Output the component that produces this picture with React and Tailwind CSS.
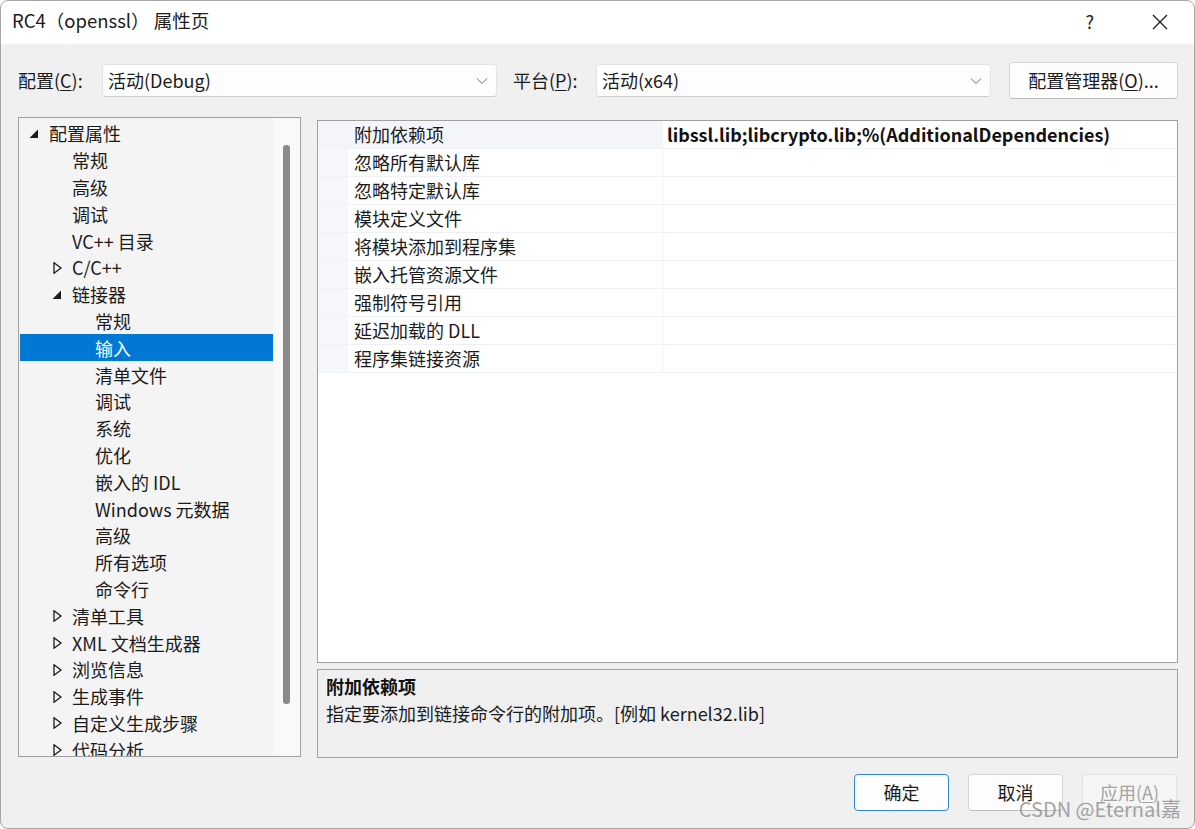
// Visual Studio project property page (Linker > Input), Windows 11 dialog look.

const FONT = {
  fontFamily:
    '"Noto Sans CJK SC", "Noto Sans", "Liberation Sans", sans-serif',
};

// level: 0/1/2 indent, kind: "open" | "closed" | null
const TREE = [
  { level: 0, kind: "open", label: "配置属性" },
  { level: 1, kind: null, label: "常规" },
  { level: 1, kind: null, label: "高级" },
  { level: 1, kind: null, label: "调试" },
  { level: 1, kind: null, label: "VC++ 目录" },
  { level: 1, kind: "closed", label: "C/C++" },
  { level: 1, kind: "open", label: "链接器" },
  { level: 2, kind: null, label: "常规" },
  { level: 2, kind: null, label: "输入", selected: true },
  { level: 2, kind: null, label: "清单文件" },
  { level: 2, kind: null, label: "调试" },
  { level: 2, kind: null, label: "系统" },
  { level: 2, kind: null, label: "优化" },
  { level: 2, kind: null, label: "嵌入的 IDL" },
  { level: 2, kind: null, label: "Windows 元数据" },
  { level: 2, kind: null, label: "高级" },
  { level: 2, kind: null, label: "所有选项" },
  { level: 2, kind: null, label: "命令行" },
  { level: 1, kind: "closed", label: "清单工具" },
  { level: 1, kind: "closed", label: "XML 文档生成器" },
  { level: 1, kind: "closed", label: "浏览信息" },
  { level: 1, kind: "closed", label: "生成事件" },
  { level: 1, kind: "closed", label: "自定义生成步骤" },
  { level: 1, kind: "closed", label: "代码分析" },
];

const INDENT = ["pl-[9px]", "pl-[32px]", "pl-[55px]"];

const PROPS = [
  { name: "附加依赖项", value: "libssl.lib;libcrypto.lib;%(AdditionalDependencies)", active: true },
  { name: "忽略所有默认库" },
  { name: "忽略特定默认库" },
  { name: "模块定义文件" },
  { name: "将模块添加到程序集" },
  { name: "嵌入托管资源文件" },
  { name: "强制符号引用" },
  { name: "延迟加载的 DLL" },
  { name: "程序集链接资源" },
];

function Chevron() {
  return (
    <svg width="12" height="8" viewBox="0 0 12 8" className="shrink-0">
      <path d="M1 1.5 L6 6.5 L11 1.5" fill="none" stroke="#6b6b6b" strokeWidth="1" />
    </svg>
  );
}

function Combo({ value, width }) {
  return (
    <div
      className={`${width} h-[33px] flex items-center pl-[5px] pr-[8px] bg-[#fdfdfd] border border-[#e3e3e3] border-b-[#cfcfcf] rounded-[4px]`}
    >
      <span className="flex-1 text-[18px] text-[#1b1b1b] leading-none pb-[1px]">{value}</span>
      <Chevron />
    </div>
  );
}

function Expander({ kind, selected }) {
  if (kind === "open") {
    return (
      <svg width="10" height="10" viewBox="0 0 10 10" className="mt-[2px]">
        <path d="M9 0.5 L9 9 L0.5 9 Z" fill={selected ? "#fff" : "#1b1b1b"} />
      </svg>
    );
  }
  if (kind === "closed") {
    return (
      <svg width="10" height="12" viewBox="0 0 10 12" className="ml-[1px] mt-[1px]">
        <path d="M1 0.8 L8 6 L1 11.2 Z" fill="none" stroke="#1b1b1b" strokeWidth="1.3" strokeLinejoin="miter" />
      </svg>
    );
  }
  return null;
}

function TreeRow({ item }) {
  return (
    <div
      className={`h-[26.8px] flex items-center ${INDENT[item.level]} ${
        item.selected ? "bg-[#0078d4] text-white" : "text-[#1b1b1b]"
      }`}
    >
      <div className="w-[20px] flex items-center">
        <Expander kind={item.kind} selected={item.selected} />
      </div>
      <span className="text-[18px] leading-none whitespace-nowrap">{item.label}</span>
    </div>
  );
}

function Button({ children, primary, disabled }) {
  return (
    <button
      className={`w-[95px] h-[37px] rounded-[4px] text-[18px] leading-none flex items-center justify-center pb-[1px] ${
        primary
          ? "bg-[#fdfdfd] border border-[#2f86d6] text-[#1b1b1b]"
          : disabled
          ? "bg-[#f5f5f5] border border-[#e2e2e2] text-[#a3a3a3]"
          : "bg-[#fdfdfd] border border-[#d6d6d6] border-b-[#bdbdbd] text-[#1b1b1b]"
      }`}
    >
      {children}
    </button>
  );
}

export default function App() {
  return (
    <div
      className="relative w-[1195px] h-[829px] flex flex-col bg-[#f0f0f0] rounded-[8px] overflow-hidden outline-1 -outline-offset-1 outline-[#a6a6a6]"
      style={FONT}
    >
      {/* title bar */}
      <div className="h-[44px] bg-white flex items-center pl-[12px] pr-[27px] shrink-0">
        <span className="text-[18.5px] text-[#1b1b1b] flex-1 pb-[2px]">RC4（openssl） 属性页</span>
        <span className="text-[18px] text-[#1b1b1b] mr-[58px] pb-[2px]">?</span>
        <svg width="16" height="16" viewBox="0 0 16 16">
          <path d="M1 1 L15 15 M15 1 L1 15" stroke="#1b1b1b" strokeWidth="1.3" />
        </svg>
      </div>

      {/* configuration / platform row */}
      <div className="mt-[18px] h-[37px] flex items-center pl-[18px] shrink-0">
        <span className="w-[84px] text-[18px] text-[#1b1b1b] pb-[1px]">
          配置(<span className="underline underline-offset-2">C</span>):
        </span>
        <Combo value="活动(Debug)" width="w-[395px]" />
        <span className="ml-[16px] w-[83px] text-[18px] text-[#1b1b1b] pb-[1px]">
          平台(<span className="underline underline-offset-2">P</span>):
        </span>
        <Combo value="活动(x64)" width="w-[395px]" />
        <button className="ml-[18px] w-[169px] h-[37px] rounded-[4px] bg-[#fdfdfd] border border-[#d6d6d6] border-b-[#bdbdbd] text-[18px] text-[#1b1b1b] leading-none pb-[1px]">
          配置管理器(<span className="underline underline-offset-2">O</span>)...
        </button>
      </div>

      {/* main area */}
      <div className="mt-[18px] flex pl-[18px] shrink-0">
        {/* tree */}
        <div className="w-[283px] h-[640px] border border-[#a0a0a0] bg-[#f4f4f4] flex overflow-hidden">
          <div className="w-[254px] pl-[1px] pt-[2px] overflow-hidden">
            {TREE.map((item, i) => (
              <TreeRow key={i} item={item} />
            ))}
          </div>
          <div className="flex-1 bg-[#f9f9f9] pl-[10px] pt-[27px]">
            <div className="w-[7px] h-[559px] bg-[#8a8a8a] rounded-[3px]" />
          </div>
        </div>

        {/* property grid + description */}
        <div className="ml-[16px] w-[861px] pt-[3px] flex flex-col gap-[6px]">
          <div className="h-[543px] border border-[#a0a0a0] bg-white">
            {PROPS.map((p, i) => (
              <div key={i} className="h-[28px] flex border-b border-[#eef1f6]">
                <div className={`w-[30px] ${p.active ? "bg-[#f3f5f9]" : "bg-[#f5f7fb]"}`} />
                <div
                  className={`w-[315px] flex items-center pl-[6px] pb-[2px] text-[18px] leading-none text-[#1b1b1b] border-r border-[#eef1f6] ${
                    p.active ? "bg-[#f3f5f9]" : ""
                  }`}
                >
                  {p.name}
                </div>
                <div className="flex-1 flex items-center pl-[4px] pb-[2px] text-[18px] leading-none font-bold text-[#111]">
                  {p.value}
                </div>
              </div>
            ))}
          </div>
          <div className="h-[89px] border border-[#a0a0a0] bg-[#efefef] px-[8px] pt-[4px]">
            <div className="text-[18px] font-bold text-[#111] leading-[24px]">附加依赖项</div>
            <div className="text-[18px] text-[#1b1b1b] leading-[30px]">
              指定要添加到链接命令行的附加项。[例如 kernel32.lib]
            </div>
          </div>
        </div>
      </div>

      {/* dialog buttons */}
      <div className="mt-[16px] flex justify-end gap-[19px] pr-[18px] shrink-0">
        <Button primary>确定</Button>
        <Button>取消</Button>
        <Button disabled>
          应用(<span className="underline underline-offset-2">A</span>)
        </Button>
      </div>

      {/* watermark */}
      <div className="absolute right-[14px] bottom-[5px] text-[20px] text-[#8c8c8c]/80 pointer-events-none">
        CSDN @Eternal嘉
      </div>
    </div>
  );
}
